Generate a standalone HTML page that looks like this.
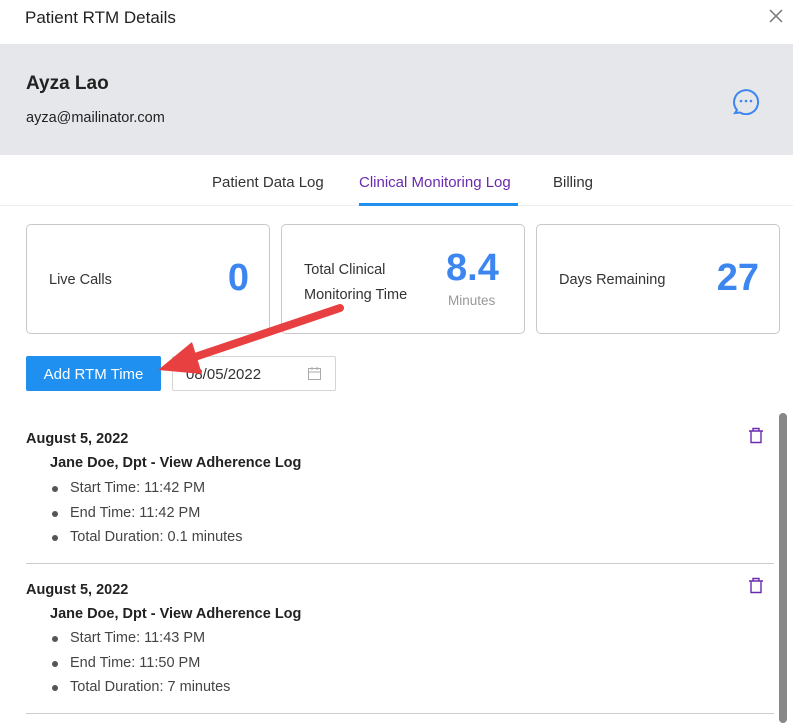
<!DOCTYPE html>
<html><head><style>
*{margin:0;padding:0;box-sizing:border-box}
body{width:793px;height:718px;overflow:hidden;background:#fff;font-family:"Liberation Sans",sans-serif;color:#222;position:relative}
.a{position:absolute}
.card{position:absolute;top:224px;width:244px;height:110px;border:1px solid #c8c8c8;border-radius:5px}
.lbl{position:absolute;font-size:14.5px;color:#333}
.num{position:absolute;font-size:38px;font-weight:bold;color:#3d86f0}
.t{font-size:14.5px;color:#333}
ul{position:absolute;left:50px;list-style:none}
li{font-size:14.5px;color:#444;height:24.5px;position:relative;padding-left:20px}
li:before{content:"";position:absolute;left:2px;top:6px;width:6px;height:6px;border-radius:50%;background:#555}
</style></head><body>
<div class="a" style="left:25px;top:8px;font-size:17px;color:#222">Patient RTM Details</div>
<svg class="a" style="left:769px;top:9px" width="14" height="14"><path d="M1 1L13 13M13 1L1 13" stroke="#777" stroke-width="1.5"/></svg>
<div class="a" style="left:0;top:44px;width:793px;height:111px;background:#e6e7eb"></div>
<div class="a" style="left:26px;top:73px;font-size:19px;font-weight:bold;color:#222">Ayza Lao</div>
<div class="a" style="left:26px;top:110px;font-size:14.5px;color:#222">ayza@mailinator.com</div>
<svg class="a" style="left:731px;top:87px" width="29" height="28" viewBox="0 0 29 28"><path d="M6 23 A12 12 0 1 1 9 25.5 L4 26 Z" fill="none" stroke="#3d86f0" stroke-width="2"/><circle cx="10" cy="14" r="1.3" fill="#3d86f0"/><circle cx="15" cy="14" r="1.3" fill="#3d86f0"/><circle cx="20" cy="14" r="1.3" fill="#3d86f0"/></svg>
<div class="a t" style="left:212px;top:174px;font-size:15px">Patient Data Log</div>
<div class="a t" style="left:359px;top:174px;font-size:15px;color:#6a2ab0">Clinical Monitoring Log</div>
<div class="a t" style="left:553px;top:174px;font-size:15px">Billing</div>
<div class="a" style="left:0;top:205px;width:793px;height:1px;background:#eee"></div>
<div class="a" style="left:359px;top:203px;width:159px;height:3px;background:#1f8ff0"></div>
<div class="card" style="left:26px"><div class="lbl" style="left:22px;top:47px">Live Calls</div><div class="num" style="right:20px;top:32px">0</div></div>
<div class="card" style="left:281px"><div class="lbl" style="left:22px;top:33px;line-height:25px">Total Clinical<br>Monitoring Time</div><div class="num" style="left:164px;top:22px">8.4</div><div class="lbl" style="left:166px;top:68px;color:#999;font-size:13.5px">Minutes</div></div>
<div class="card" style="left:536px"><div class="lbl" style="left:22px;top:47px">Days Remaining</div><div class="num" style="right:20px;top:32px">27</div></div>
<div class="a" style="left:26px;top:356px;width:135px;height:35px;background:#1f8ff0;border-radius:2px;color:#fff;font-size:15px;text-align:center;line-height:37px">Add RTM Time</div>
<div class="a" style="left:172px;top:356px;width:164px;height:35px;border:1px solid #d5d5d5;border-radius:2px;font-size:15px;color:#333;padding-left:13px;line-height:35px">08/05/2022</div>
<svg class="a" style="left:307px;top:366px" width="15" height="15"><rect x="1.5" y="2.5" width="12" height="11" fill="none" stroke="#aaa"/><path d="M1.5 6h12M5 1v3M10 1v3" stroke="#aaa"/></svg>
<svg class="a" style="left:150px;top:300px" width="200" height="80"><path d="M190 8 L30 62" stroke="#e84040" stroke-width="8" stroke-linecap="round"/><path d="M8 70 L42 42 L52 74 Z" fill="#e84040"/></svg>
<div class="a" style="left:26px;top:431px;font-size:14.5px;font-weight:bold">August 5, 2022</div>
<div class="a" style="left:50px;top:455px;font-size:14.5px;font-weight:bold">Jane Doe, Dpt - View Adherence Log</div>
<ul style="top:480px"><li>Start Time: 11:42 PM</li><li>End Time: 11:42 PM</li><li>Total Duration: 0.1 minutes</li></ul>
<div class="a" style="left:26px;top:563px;width:748px;height:1px;background:#ccc"></div>
<div class="a" style="left:26px;top:582px;font-size:14.5px;font-weight:bold">August 5, 2022</div>
<div class="a" style="left:50px;top:606px;font-size:14.5px;font-weight:bold">Jane Doe, Dpt - View Adherence Log</div>
<ul style="top:630px"><li>Start Time: 11:43 PM</li><li>End Time: 11:50 PM</li><li>Total Duration: 7 minutes</li></ul>
<div class="a" style="left:26px;top:713px;width:748px;height:1px;background:#ccc"></div>
<svg class="a" style="left:748px;top:427px" width="16" height="17"><path d="M1 4h14M5 4V1.5h6V4M3 4v11.5h10V4" fill="none" stroke="#6a2ab0" stroke-width="1.4"/></svg>
<svg class="a" style="left:748px;top:577px" width="16" height="17"><path d="M1 4h14M5 4V1.5h6V4M3 4v11.5h10V4" fill="none" stroke="#6a2ab0" stroke-width="1.4"/></svg>
<div class="a" style="left:779px;top:413px;width:8px;height:310px;background:#888;border-radius:4px"></div>
</body></html>
